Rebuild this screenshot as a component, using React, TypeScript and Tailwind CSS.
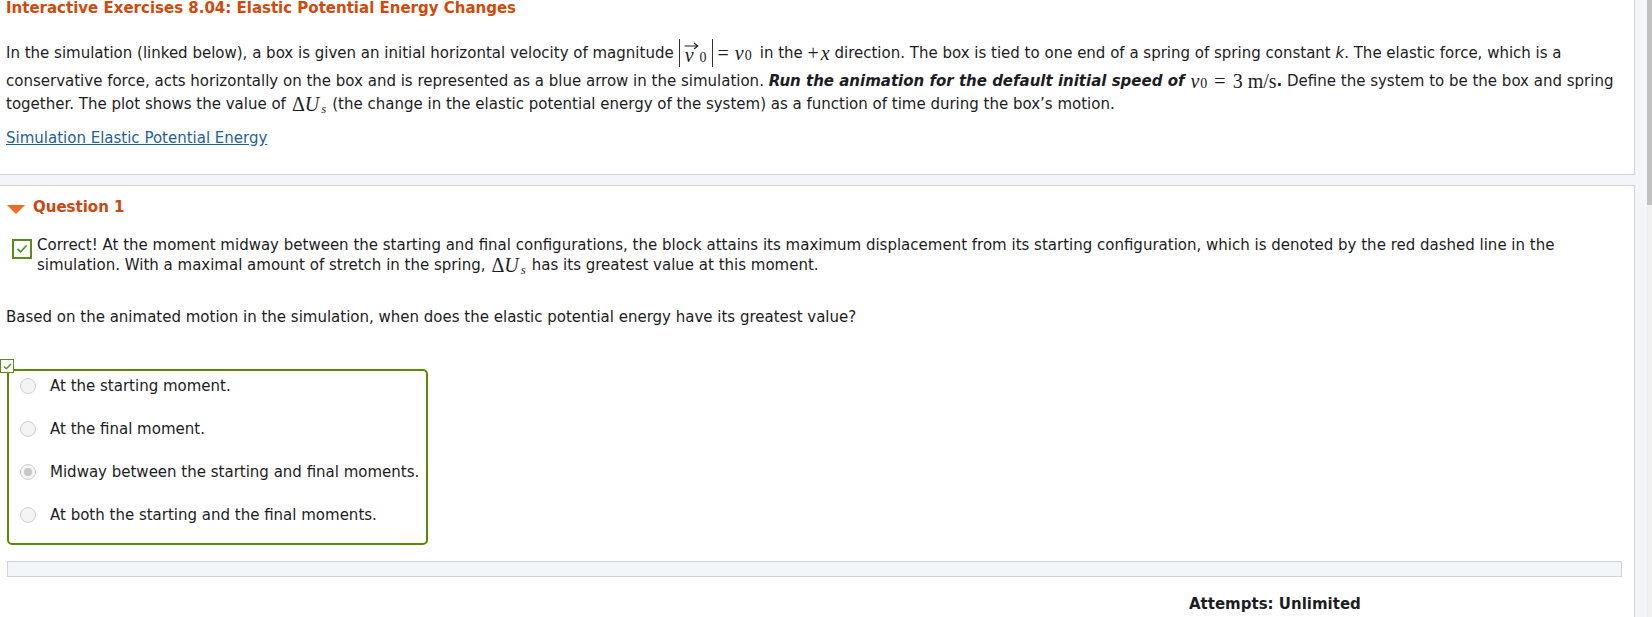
import React from "react";

const Math = ({ children, className = "" }: { children: React.ReactNode; className?: string }) => (
  <span className={"font-['Liberation_Serif',serif] " + className}>{children}</span>
);

const DeltaUs = () => (
  <Math className="text-[20px] mx-[6px]">
    Δ<i>U</i>
    <sub className="text-[13px] italic relative top-[2px] ml-[2px]">s</sub>
  </Math>
);

const VecV0 = () => (
  <span className="inline-flex items-center align-middle mx-[5px]">
    <span className="inline-block w-px h-[28px] bg-[#333]" />
    <span className="inline-flex flex-col items-center px-[5px] font-['Liberation_Serif',serif]">
      <svg width="15" height="8" viewBox="0 0 15 8" className="-mb-[2px] -ml-[8px]">
        <path d="M0.5 4 H13.5 M10 1 L13.8 4 L10 7" stroke="#222" strokeWidth="1.1" fill="none" />
      </svg>
      <span className="leading-[15px]">
        <i className="text-[20px]">v</i>
        <span className="text-[14px] ml-[6px]">0</span>
      </span>
    </span>
    <span className="inline-block w-px h-[28px] bg-[#333]" />
  </span>
);

const Radio = ({ checked }: { checked?: boolean }) => (
  <span className="w-[16px] h-[16px] rounded-full border border-[#cfcfcf] bg-[#f4f4f4] flex items-center justify-center shrink-0">
    {checked && <span className="w-[8px] h-[8px] rounded-full bg-[#c6c6c6]" />}
  </span>
);

export default function App() {
  const options = [
    "At the starting moment.",
    "At the final moment.",
    "Midway between the starting and final moments.",
    "At both the starting and the final moments.",
  ];
  return (
    <div className="flex h-[617px] w-[1652px] overflow-hidden bg-[#f3f6f9] font-['DejaVu_Sans',sans-serif] text-[15px] text-[#1c1c24]">
      <div className="flex-1 flex flex-col pr-[12px]">
        <div className="bg-white border-r border-b border-[#ccd4df] h-[175px] shrink-0 pl-[6px] flex flex-col">
          <div className="h-[17px] leading-[17px] font-bold text-[15px] text-[#cf4a0c] whitespace-nowrap">
            Interactive Exercises 8.04: Elastic Potential Energy Changes
          </div>
          <div className="mt-[22px] h-[28px] flex items-center whitespace-nowrap">
            In the simulation (linked below), a box is given an initial horizontal velocity of magnitude
            <VecV0 />
            <Math className="text-[20px] mr-[8px]">
              <span className="mr-[6px]">=</span>
              <i>v</i>
              <span className="text-[14px] ml-[1px]">0</span>
            </Math>
            in the&nbsp;
            <Math className="text-[20px]">
              +<i className="ml-[2px]">x</i>
            </Math>
            &nbsp;direction. The box is tied to one end of a spring of spring constant&nbsp;<i>k</i>. The elastic force, which is a
          </div>
          <div className="mt-[3px] h-[22px] flex items-center whitespace-nowrap">
            conservative force, acts horizontally on the box and is represented as a blue arrow in the simulation.&nbsp;
            <b className="italic">Run the animation for the default initial speed of</b>
            <Math className="text-[20px] ml-[6px]">
              <i>v</i>
              <span className="text-[14px] ml-[1px]">0</span>
              <span className="mx-[7px]">=</span>3 m/s
            </Math>
            <b>.</b>&nbsp;Define the system to be the box and spring
          </div>
          <div className="mt-px h-[22px] flex items-center whitespace-nowrap">
            together. The plot shows the value of
            <DeltaUs />
            (the change in the elastic potential energy of the system) as a function of time during the box’s motion.
          </div>
          <div className="mt-[12px] h-[22px] leading-[22px]">
            <a className="text-[#1f5f9a] underline">Simulation Elastic Potential Energy</a>
          </div>
        </div>

        <div className="mt-[10px] flex-1 bg-white border-t border-r border-[#ccd4df] flex flex-col">
          <div className="mt-[10px] h-[22px] flex items-center">
            <svg width="18" height="9" viewBox="0 0 18 9" className="ml-[7px] mt-[4px]">
              <path d="M0 0 H18 L9 9 Z" fill="#f36b1f" />
            </svg>
            <span className="ml-[8px] font-bold text-[15px] text-[#cc470f]">Question 1</span>
          </div>

          <div className="mt-[17px] flex items-start">
            <span className="ml-[12px] mt-[4px] w-[20px] h-[20px] border-2 border-[#5c8a1e] bg-white flex items-center justify-center shrink-0">
              <svg width="12" height="10" viewBox="0 0 12 10">
                <path d="M1.5 5 L4.5 8 L10.5 1.5" stroke="#4f9a22" strokeWidth="1.8" fill="none" />
              </svg>
            </span>
            <div className="ml-[5px] leading-[20px]">
              <div className="whitespace-nowrap">
                Correct! At the moment midway between the starting and final configurations, the block attains its maximum displacement from its starting configuration, which is denoted by the red dashed line in the
              </div>
              <div className="whitespace-nowrap flex items-center h-[20px]">
                simulation. With a maximal amount of stretch in the spring,
                <DeltaUs />
                has its greatest value at this moment.
              </div>
            </div>
          </div>

          <div className="mt-[32px] ml-[6px] leading-[20px] whitespace-nowrap">
            Based on the animated motion in the simulation, when does the elastic potential energy have its greatest value?
          </div>

          <div className="relative mt-[42px]">
            <span className="absolute left-0 -top-[10px] w-[14px] h-[14px] border border-[#5c8a1e] bg-white flex items-center justify-center z-10">
              <svg width="9" height="7" viewBox="0 0 9 7">
                <path d="M1 3.5 L3.3 5.8 L8 1" stroke="#4f9a22" strokeWidth="1.4" fill="none" />
              </svg>
            </span>
            <div className="ml-[7px] w-[421px] h-[176px] border-2 border-[#5b8a00] rounded-[5px] pt-[4px] flex flex-col gap-[21px]">
              {options.map((o, i) => (
                <div key={o} className="h-[22px] flex items-center">
                  <span className="ml-[11px]">
                    <Radio checked={i === 2} />
                  </span>
                  <span className="ml-[14px] whitespace-nowrap">{o}</span>
                </div>
              ))}
            </div>
          </div>

          <div className="mt-[16px] ml-[7px] w-[1615px] h-[16px] bg-[#f3f6f9] border border-[#ccd4df]" />

          <div className="mt-[17px] ml-[1189px] leading-[20px] font-bold text-[15px] whitespace-nowrap">
            Attempts: Unlimited
          </div>
        </div>
      </div>
      <div className="w-[5px] flex flex-col shrink-0">
        <div className="h-[205px] bg-[#c1c1c1]" />
        <div className="flex-1 bg-[#f0f0f0]" />
      </div>
    </div>
  );
}
